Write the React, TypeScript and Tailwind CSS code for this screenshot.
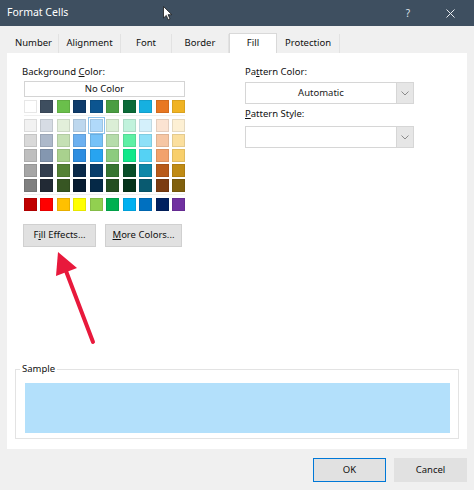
import React from 'react';

const FONT = { fontFamily: '"Noto Sans", "Open Sans", Arial, sans-serif' };

const themeRow = ['#ffffff', '#3e4e5f', '#6abf4b', '#0f3b6b', '#0c5590', '#4a9d42', '#0b6a38', '#16b0e0', '#e87722', '#f0b323'];

const tintRows = [
  ['#f2f2f2', '#d6dce4', '#e2efda', '#bdd7ee', '#b0d9fa', '#dbeed6', '#c1f2dc', '#d4f0fb', '#fbe3d2', '#fdf0d4'],
  ['#d9d9d9', '#adb9ca', '#c5e0b4', '#6cb0f0', '#75c2f8', '#b5dcab', '#5ef0a5', '#8ee0f8', '#f6c6a4', '#fbdf9e'],
  ['#bfbfbf', '#8497b0', '#a9d18e', '#2e8de0', '#28a4f0', '#8ccb7f', '#10e88a', '#55d2f4', '#f2a26c', '#f8cf6b'],
  ['#a6a6a6', '#333f4f', '#548235', '#0a2a4a', '#093e6b', '#367530', '#084e29', '#0e87a8', '#b85a19', '#c08b14'],
  ['#808080', '#222a35', '#375623', '#071c31', '#052947', '#244e20', '#06341b', '#095a70', '#7b3c11', '#80600e'],
];

const standardRow = ['#c00000', '#ff0000', '#ffc000', '#ffff00', '#92d050', '#00b050', '#00b0f0', '#0070c0', '#002060', '#7030a0'];

const tabs = [
  { label: 'Number', w: 'w-[50px]' },
  { label: 'Alignment', w: 'w-[62px]' },
  { label: 'Font', w: 'w-[51px]' },
  { label: 'Border', w: 'w-[57px]' },
  { label: 'Fill', w: 'w-[48px]', active: true },
  { label: 'Protection', w: 'w-[63px]' },
];

const Swatch: React.FC<{ color: string; selected?: boolean }> = ({ color, selected }) => (
  <div
    className={`w-[13px] h-[13px] border border-[#00000018] ${selected ? 'outline outline-1 outline-[#8cc2ec] outline-offset-1' : ''}`}
    style={{ backgroundColor: color }}
  />
);

const SwatchRow: React.FC<{ colors: string[]; selectedIndex?: number }> = ({ colors, selectedIndex }) => (
  <div className="flex justify-between w-[161px]">
    {colors.map((c, i) => (
      <Swatch key={i} color={c} selected={i === selectedIndex} />
    ))}
  </div>
);

const Chevron = () => (
  <svg width="8" height="5" viewBox="0 0 8 5">
    <path d="M0.5 0.5 L4 4 L7.5 0.5" fill="none" stroke="#8a8a8a" strokeWidth="1" />
  </svg>
);

const Combo: React.FC<{ value?: string }> = ({ value }) => (
  <div className="flex w-[169px] h-[22px] border border-[#d6d6d6] bg-white">
    <div className="flex-1 flex items-center justify-center text-[9.5px] text-[#1a1a1a]">{value}</div>
    <div className="w-[17px] bg-[#e6e6e6] flex items-center justify-center border-l border-[#d6d6d6]">
      <Chevron />
    </div>
  </div>
);

const App: React.FC = () => {
  return (
    <div className="relative w-[474px] h-[490px] bg-[#f0f0f0] overflow-hidden text-[#111111]" style={FONT}>
      {/* Title bar */}
      <div className="h-[26px] bg-[#3e4f60] flex items-center pl-[7px] pr-[19px] text-white">
        <span className="text-[10.5px]">Format Cells</span>
        <div className="flex-1" />
        <span className="text-[10px] mr-[36px] text-[#dfe4ea]">?</span>
        <svg width="9" height="9" viewBox="0 0 9 9">
          <path d="M0.5 0.5 L8.5 8.5 M8.5 0.5 L0.5 8.5" stroke="#e8ecf0" strokeWidth="1" />
        </svg>
      </div>

      {/* Tabs */}
      <div className="flex pl-[9px] mt-[8px] h-[19px]">
        {tabs.map((t) => (
          <div
            key={t.label}
            className={`${t.w} flex items-center justify-center text-[9.5px] ${
              t.active
                ? 'bg-white border border-b-0 border-[#d9d9d9] -mt-[1px] h-[20px]'
                : 'border-r border-[#e2e2e2]'
            }`}
          >
            {t.label}
          </div>
        ))}
      </div>

      {/* Panel */}
      <div className="mx-[7px] w-[460px] h-[396px] bg-white flex flex-col">
        <div className="flex pt-[12px]">
          {/* Left column */}
          <div className="pl-[15px] w-[238px]">
            <div className="text-[9.5px] leading-[14px]">
              Background <span className="underline">C</span>olor:
            </div>
            <div className="pl-[2px] mt-[2px]">
              <div className="w-[161px] h-[16px] border border-[#d4d4d4] flex items-center justify-center text-[9.5px]">
                No Color
              </div>
              <div className="mt-[3px]">
                <SwatchRow colors={themeRow} />
              </div>
              <div className="h-[1px] w-[161px] bg-[#efefef] mt-[2px]" />
              <div className="mt-[3px] flex flex-col gap-[2px]">
                {tintRows.map((r, i) => (
                  <SwatchRow key={i} colors={r} selectedIndex={i === 0 ? 4 : undefined} />
                ))}
              </div>
              <div className="h-[1px] w-[161px] bg-[#efefef] mt-[2px]" />
              <div className="mt-[3px]">
                <SwatchRow colors={standardRow} />
              </div>
            </div>
            <div className="flex gap-[9px] mt-[13px] pl-[1px]">
              <button className="w-[73px] h-[23px] bg-[#e1e1e1] border border-[#d0d0d0] text-[9.5px]">
                F<span className="underline">i</span>ll Effects...
              </button>
              <button className="w-[77px] h-[23px] bg-[#e1e1e1] border border-[#d0d0d0] text-[9.5px]">
                <span className="underline">M</span>ore Colors...
              </button>
            </div>
          </div>

          {/* Right column */}
          <div className="w-[169px]">
            <div className="text-[9.5px] leading-[14px]">
              Pa<span className="underline">t</span>tern Color:
            </div>
            <div className="mt-[3px]">
              <Combo value="Automatic" />
            </div>
            <div className="text-[9.5px] leading-[14px] mt-[3px]">
              <span className="underline">P</span>attern Style:
            </div>
            <div className="mt-[5px]">
              <Combo />
            </div>
          </div>
        </div>

        <div className="flex-1" />

        {/* Sample */}
        <div className="relative mx-[8px] mb-[10px] h-[70px] border border-[#e3e3e3] pt-[13px] pl-[9px] pr-[8px]">
          <span className="absolute left-[4px] -top-[8px] bg-white px-[2px] text-[9.5px] leading-[14px]">Sample</span>
          <div className="h-[50px] bg-[#b3e0fb]" />
        </div>
      </div>

      {/* Bottom buttons */}
      <div className="flex justify-end gap-[8px] pr-[7px] pt-[9px]">
        <button className="w-[73px] h-[24px] bg-[#e1e1e1] border border-[#0078d7] text-[9.5px]">OK</button>
        <button className="w-[73px] h-[24px] bg-[#e1e1e1] border border-[#e1e1e1] text-[9.5px]">Cancel</button>
      </div>

      {/* Mouse cursor */}
      <svg className="absolute left-[163px] top-[6px]" width="10" height="15" viewBox="0 0 10 15">
        <path d="M0.5 0.5 L0.5 12 L3.3 9.4 L5.2 13.8 L7 13 L5.1 8.7 L8.8 8.7 Z" fill="#ffffff" stroke="#1b1b1b" strokeWidth="0.8" />
      </svg>

      {/* Red annotation arrow */}
      <svg className="absolute left-0 top-0 pointer-events-none" width="474" height="490" viewBox="0 0 474 490">
        <line x1="93" y1="342" x2="66" y2="271" stroke="#e8193c" strokeWidth="4" strokeLinecap="round" />
        <polygon points="58,252 77,268 56,276" fill="#e8193c" />
      </svg>
    </div>
  );
};

export default App;
